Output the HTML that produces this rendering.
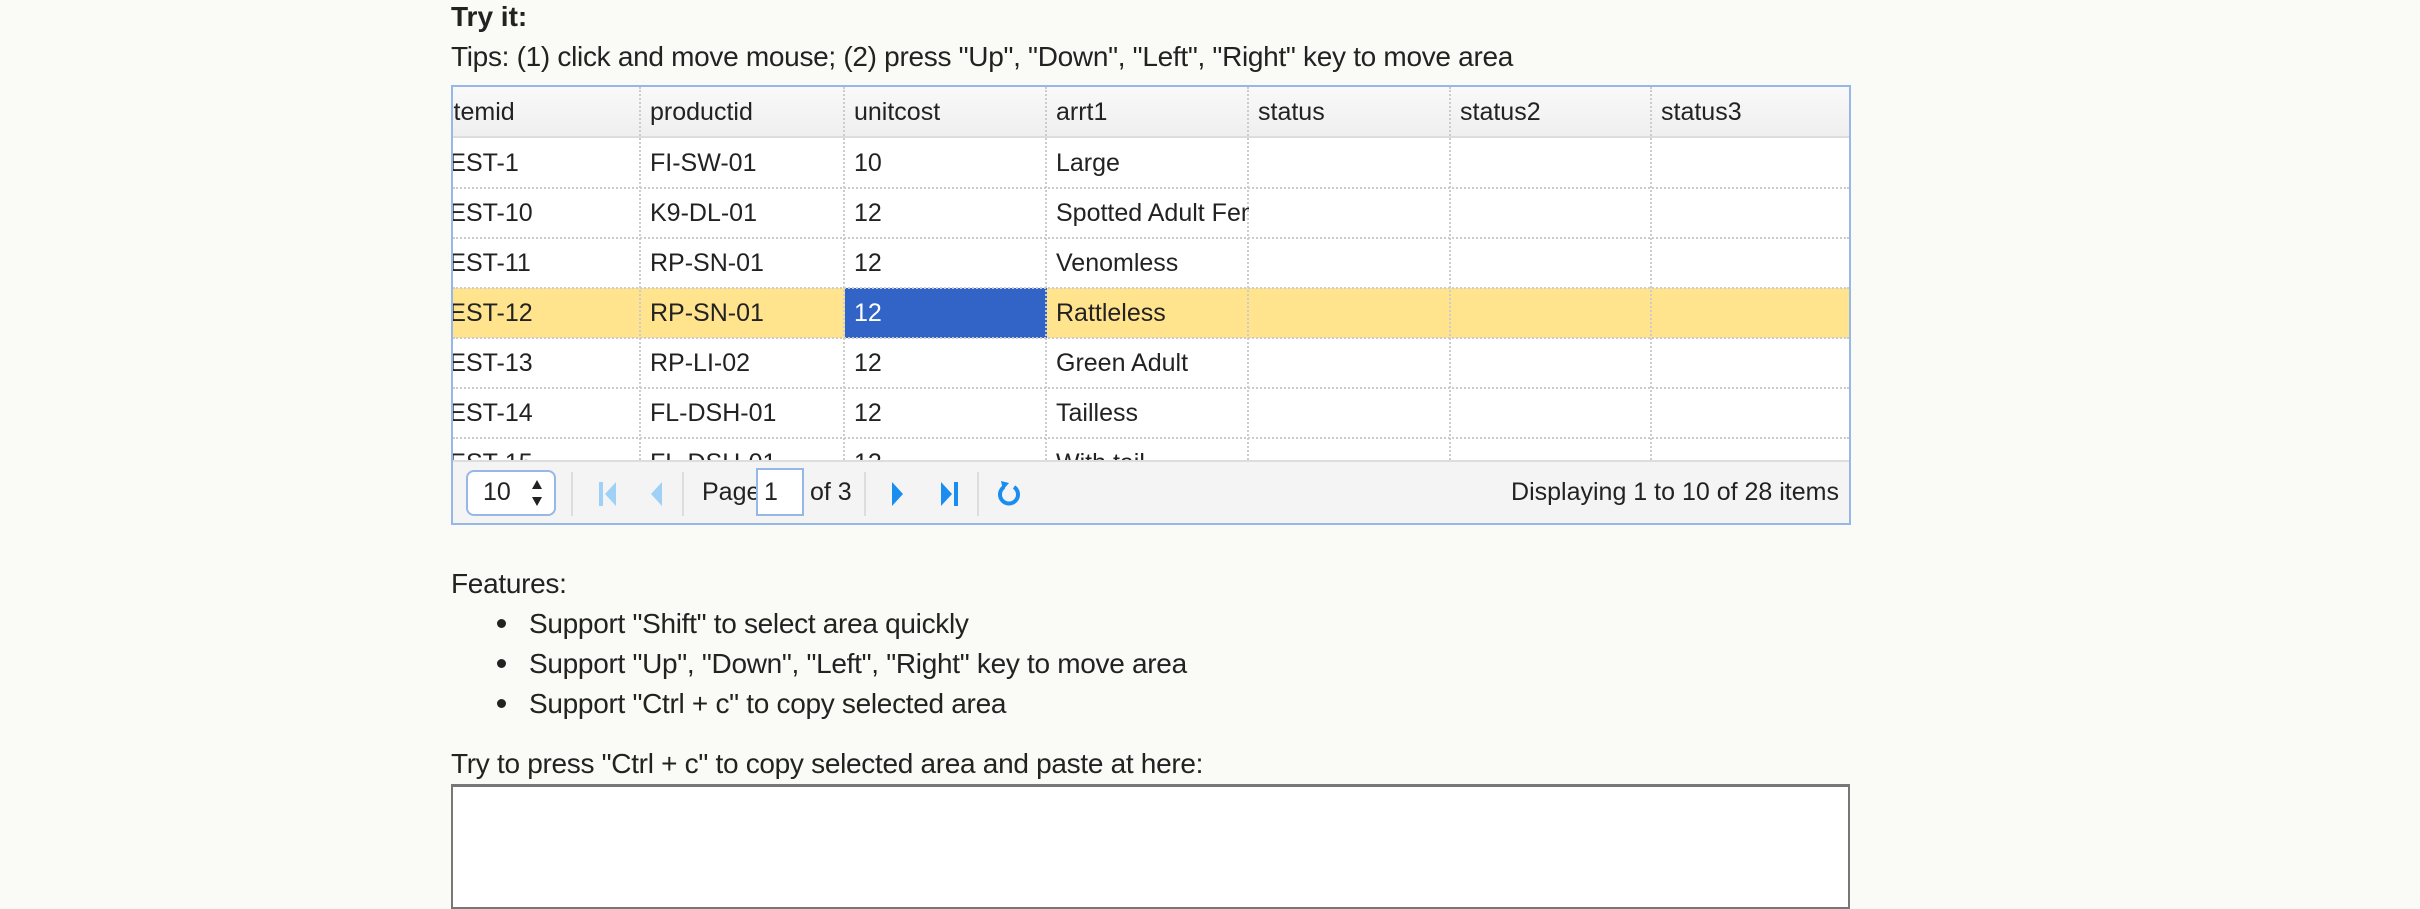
<!DOCTYPE html>
<html><head><meta charset="utf-8"><style>
body{margin:0;width:2420px;height:878px;background:#fafaf6;font-family:"Liberation Sans",sans-serif;color:#222;position:relative;overflow:hidden}
.a{position:absolute;white-space:nowrap}
.t{font-size:28px;letter-spacing:-0.3px}
#grid{position:absolute;left:451px;top:85px;width:1396px;height:436px;border:2px solid #95b8e7;background:#fff;overflow:hidden}
.hdr{position:absolute;left:0;top:0;width:100%;height:49px;background:linear-gradient(#f9f9f9,#efefef);border-bottom:2px solid #ddd}
.cell{position:absolute;height:50px;line-height:50px;font-size:25px;padding-left:9px;box-sizing:border-box;overflow:hidden;white-space:nowrap}
.vl{position:absolute;top:0;height:373px;border-left:2px dotted #ccc}
.hl{position:absolute;left:0;width:100%;border-top:2px dotted #ccc}
.pager{position:absolute;left:0;top:373px;width:100%;height:63px;background:#f4f4f4;border-top:2px solid #ddd}
.sep{position:absolute;top:10px;height:44px;border-left:2px solid #ddd}
.p{font-size:25px;top:16px}
</style></head><body>
<div class="a" style="left:451px;top:1px;font-size:28px;font-weight:bold">Try it:</div>
<div class="a t" style="left:451px;top:41px">Tips: (1) click and move mouse; (2) press "Up", "Down", "Left", "Right" key to move area</div>
<div id="grid">
<div class="hdr"></div>
<div style="position:absolute;left:0;top:201px;width:100%;height:50px;background:#ffe48d"></div>
<div style="position:absolute;left:392px;top:201px;width:202px;height:50px;background:#3264c8"></div>
<div class="hl" style="top:100px"></div><div class="hl" style="top:150px"></div><div class="hl" style="top:200px"></div><div class="hl" style="top:250px"></div><div class="hl" style="top:300px"></div><div class="hl" style="top:350px"></div>
<div class="vl" style="left:186px"></div><div class="vl" style="left:390px"></div><div class="vl" style="left:592px"></div><div class="vl" style="left:794px"></div><div class="vl" style="left:996px"></div><div class="vl" style="left:1197px"></div>
<div class="cell" style="left:-14px;top:0;width:200px">itemid</div>
<div class="cell" style="left:188px;top:0;width:202px">productid</div>
<div class="cell" style="left:392px;top:0;width:202px">unitcost</div>
<div class="cell" style="left:594px;top:0;width:202px">arrt1</div>
<div class="cell" style="left:796px;top:0;width:202px">status</div>
<div class="cell" style="left:998px;top:0;width:202px">status2</div>
<div class="cell" style="left:1199px;top:0;width:202px">status3</div>

<div class="cell" style="left:-28px;top:51px">TEST-1</div><div class="cell" style="left:188px;top:51px">FI-SW-01</div><div class="cell" style="left:392px;top:51px">10</div><div class="cell" style="left:594px;top:51px;width:202px">Large</div>
<div class="cell" style="left:-28px;top:101px">TEST-10</div><div class="cell" style="left:188px;top:101px">K9-DL-01</div><div class="cell" style="left:392px;top:101px">12</div><div class="cell" style="left:594px;top:101px;width:202px">Spotted Adult Female</div>
<div class="cell" style="left:-28px;top:151px">TEST-11</div><div class="cell" style="left:188px;top:151px">RP-SN-01</div><div class="cell" style="left:392px;top:151px">12</div><div class="cell" style="left:594px;top:151px;width:202px">Venomless</div>
<div class="cell" style="left:-28px;top:201px">TEST-12</div><div class="cell" style="left:188px;top:201px">RP-SN-01</div><div class="cell" style="left:392px;top:201px;color:#fff">12</div><div class="cell" style="left:594px;top:201px;width:202px">Rattleless</div>
<div class="cell" style="left:-28px;top:251px">TEST-13</div><div class="cell" style="left:188px;top:251px">RP-LI-02</div><div class="cell" style="left:392px;top:251px">12</div><div class="cell" style="left:594px;top:251px;width:202px">Green Adult</div>
<div class="cell" style="left:-28px;top:301px">TEST-14</div><div class="cell" style="left:188px;top:301px">FL-DSH-01</div><div class="cell" style="left:392px;top:301px">12</div><div class="cell" style="left:594px;top:301px;width:202px">Tailless</div>
<div class="cell" style="left:-28px;top:351px">TEST-15</div><div class="cell" style="left:188px;top:351px">FL-DSH-01</div><div class="cell" style="left:392px;top:351px">12</div><div class="cell" style="left:594px;top:351px;width:202px">With tail</div>
<div class="pager">
 <div style="position:absolute;left:13px;top:8px;width:86px;height:42px;border:2px solid #95b8e7;border-radius:8px;background:#fff"></div>
 <div class="a p" style="left:30px">10</div>
 <svg class="a" style="left:78px;top:18px" width="12" height="26"><path d="M6 0L11 9H1Z M6 26L11 17H1Z" fill="#222"/></svg>
 <div class="sep" style="left:118px"></div><div class="sep" style="left:229px"></div><div class="sep" style="left:411px"></div><div class="sep" style="left:524px"></div>
 <svg class="a" style="left:146px;top:20px" width="20" height="24"><rect x="0" y="0" width="4" height="24" fill="#9fd0f6"/><path d="M17 0V24L6 12Z" fill="#9fd0f6"/></svg>
 <svg class="a" style="left:197px;top:20px" width="14" height="24"><path d="M12 0V24L1 12Z" fill="#9fd0f6"/></svg>
 <div class="a p" style="left:249px">Page</div>
 <div style="position:absolute;left:303px;top:6px;width:44px;height:44px;border:2px solid #95b8e7;background:#fff;font-size:25px;line-height:44px"><span style="margin-left:6px">1</span></div>
 <div class="a p" style="left:357px">of 3</div>
 <svg class="a" style="left:438px;top:20px" width="14" height="24"><path d="M1 0V24L12 12Z" fill="#1a8ef0"/></svg>
 <svg class="a" style="left:487px;top:20px" width="20" height="24"><path d="M1 0V24L12 12Z" fill="#1a8ef0"/><rect x="14" y="0" width="4" height="24" fill="#1a8ef0"/></svg>
 <svg class="a" style="left:544px;top:18px" width="24" height="28"><path d="M17 7A9 9 0 1 1 7 7" fill="none" stroke="#1a8ef0" stroke-width="4"/><path d="M4 1L12 3L6 10Z" fill="#1a8ef0"/></svg>
 <div class="a p" style="right:10px">Displaying 1 to 10 of 28 items</div>
</div>
</div>
<div class="a t" style="left:451px;top:568px">Features:</div>
<div class="a" style="left:497px;top:619px;width:9px;height:9px;border-radius:50%;background:#222"></div>
<div class="a" style="left:497px;top:659px;width:9px;height:9px;border-radius:50%;background:#222"></div>
<div class="a" style="left:497px;top:699px;width:9px;height:9px;border-radius:50%;background:#222"></div>
<div class="a t" style="left:529px;top:608px">Support "Shift" to select area quickly</div>
<div class="a t" style="left:529px;top:648px">Support "Up", "Down", "Left", "Right" key to move area</div>
<div class="a t" style="left:529px;top:688px">Support "Ctrl + c" to copy selected area</div>
<div class="a t" style="left:451px;top:748px">Try to press "Ctrl + c" to copy selected area and paste at here:</div>
<div style="position:absolute;left:451px;top:784px;width:1395px;height:120px;border:2px solid #777;border-top-width:3px;background:#fff"></div>
</body></html>
